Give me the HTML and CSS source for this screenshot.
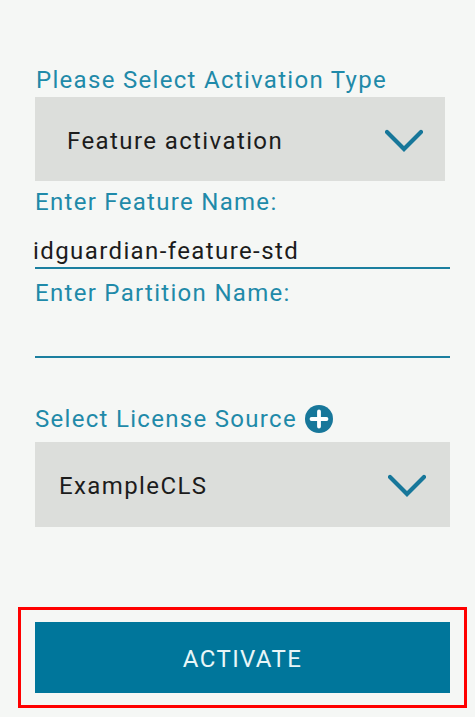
FILE: index.html
```html
<!DOCTYPE html>
<html>
<head>
<meta charset="utf-8">
<link rel="stylesheet" href="styles.css">
</head>
<body>
<div class="form">
  <div class="label label-first">Please Select Activation Type</div>
  <div class="spinner spinner-narrow">
    <span class="spinner-text">Feature activation</span>
    <svg class="chevron" width="38" height="24" viewBox="0 0 38 24"><polyline points="2,3 19,20 36,3" fill="none" stroke="#17779a" stroke-width="4.2" stroke-linecap="round" stroke-linejoin="miter"/></svg>
  </div>
  <div class="label label-feature">Enter Feature Name:</div>
  <div class="input input-filled"><span class="input-text">idguardian-feature-std</span></div>
  <div class="label label-partition">Enter Partition Name:</div>
  <div class="input input-empty"></div>
  <div class="label label-source">
    <span>Select License Source</span>
    <svg class="plus" width="28" height="28" viewBox="0 0 28 28"><circle cx="14" cy="14" r="14" fill="#17779a"/><path d="M14 6.5V21.5M6.5 14H21.5" stroke="#fff" stroke-width="3.8" stroke-linecap="round"/></svg>
  </div>
  <div class="spinner spinner-source">
    <span class="spinner-text">ExampleCLS</span>
    <svg class="chevron" width="38" height="24" viewBox="0 0 38 24"><polyline points="2,3 19,20 36,3" fill="none" stroke="#17779a" stroke-width="4.2" stroke-linecap="round" stroke-linejoin="miter"/></svg>
  </div>
  <div class="highlight">
    <button class="activate">ACTIVATE</button>
  </div>
</div>
</body>
</html>
```
FILE: styles.css
```css
html, body {
  margin: 0;
  padding: 0;
}
body {
  background: #f5f7f5;
  font-family: Roboto, "Noto Sans", "Liberation Sans", sans-serif;
  width: 475px;
  height: 717px;
  overflow: hidden;
}
.form {
  padding: 66px 25px 0 35px;
  display: flex;
  flex-direction: column;
}
.label {
  color: #1f8aa9;
  font-size: 24px;
  line-height: 28px;
  height: 28px;
  letter-spacing: 1.3px;
  white-space: nowrap;
}
.label-first { margin-left: 1px; }
.spinner {
  background: #dcdedb;
  display: flex;
  align-items: center;
  justify-content: space-between;
  box-sizing: border-box;
}
.spinner-narrow {
  margin: 3px 5px 0 0;
  height: 84px;
  padding: 4px 22px 0 32px;
}
.spinner-source {
  margin-top: 9px;
  height: 85px;
  padding: 2px 24px 0 24px;
}
.spinner-text {
  color: #1c1c1c;
  font-size: 24px;
  line-height: 28px;
  letter-spacing: 1.4px;
}
.chevron { display: block; }
.label-feature { margin-top: 7px; }
.input {
  border-bottom: 2px solid #1b7f9f;
  box-sizing: content-box;
}
.input-filled {
  margin-top: 21px;
  padding-bottom: 2px;
  height: 28px;
}
.input-text {
  display: block;
  margin-left: -2px;
  color: #1c1c1c;
  font-size: 24px;
  line-height: 28px;
  letter-spacing: 1.4px;
}
.label-partition { margin-top: 10px; }
.input-empty {
  margin-top: 20px;
  height: 29px;
}
.label-source {
  margin-top: 47px;
  display: flex;
  align-items: center;
  gap: 8px;
}
.plus { display: block; margin-top: -1px; }
.highlight {
  margin: 80px -17px 0 -17px;
  border: 3px solid #ff0000;
  padding: 12px 14px;
}
.activate {
  display: block;
  width: 100%;
  height: 71px;
  border: none;
  margin: 0;
  background: #00769b;
  color: #e8f6f8;
  font-family: Roboto, "Noto Sans", "Liberation Sans", sans-serif;
  font-size: 24px;
  letter-spacing: 1.4px;
  padding: 2px 0 0 0;
}
```
